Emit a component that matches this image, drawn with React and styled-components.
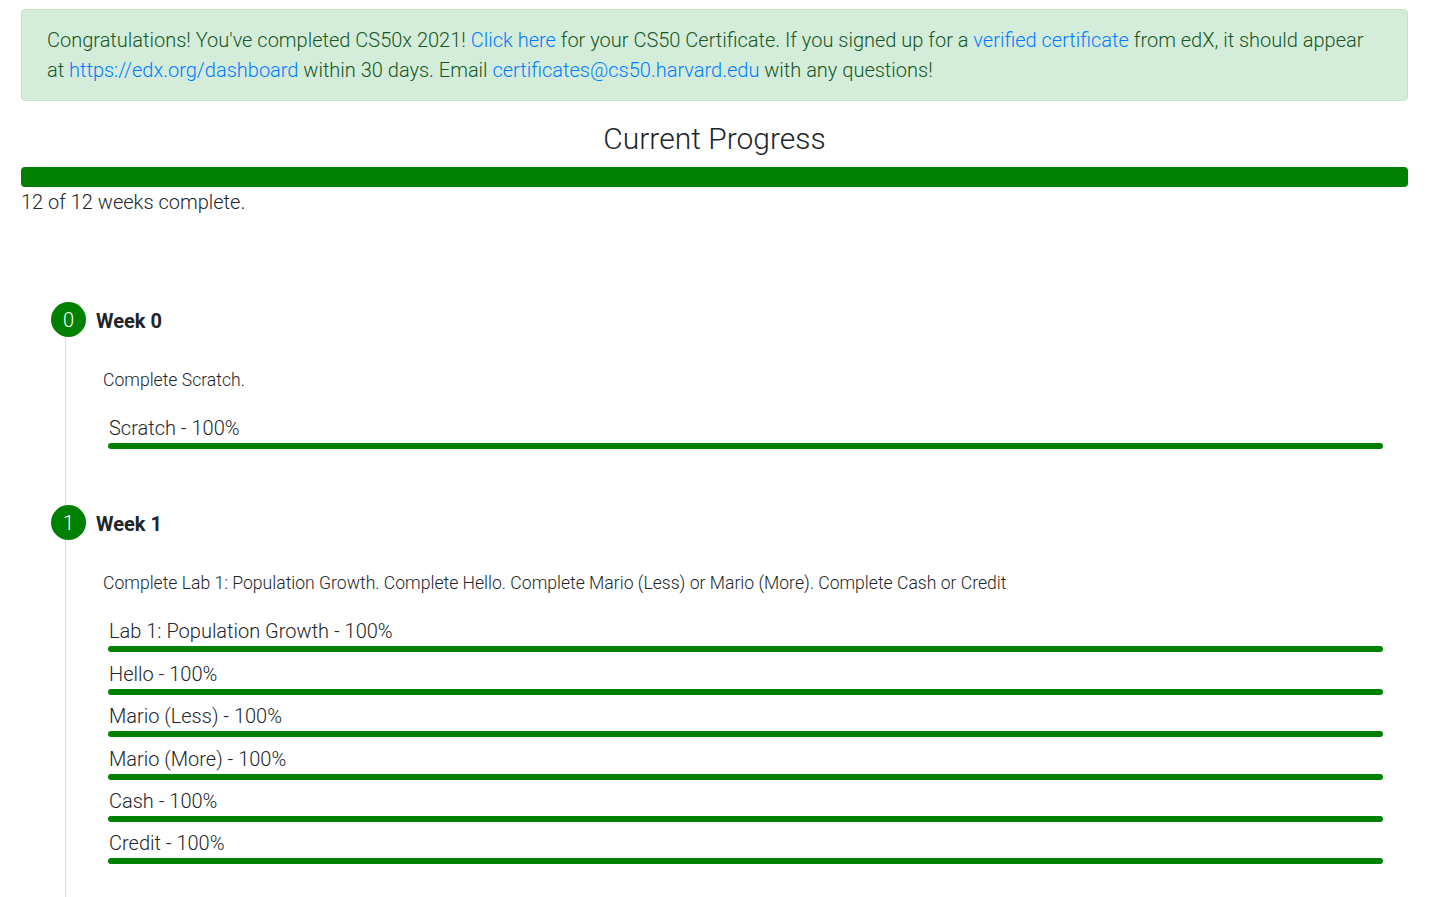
import React from 'react';
import styled, { createGlobalStyle } from 'styled-components';

const GlobalStyle = createGlobalStyle`
  html, body { margin: 0; padding: 0; background: #fff; }
  body {
    font-family: Roboto, "Liberation Sans", sans-serif;
    font-weight: 300;
    font-size: 20px;
    color: #212529;
  }
`;

const Page = styled.div`
  padding: 9px 35px 0 21px;
`;

const Alert = styled.div`
  background: #d4edda;
  border: 1px solid #c3e6cb;
  border-radius: 4px;
  color: #155724;
  padding: 15px 25px;
  line-height: 30px;
`;

const A = styled.a`
  color: #007bff;
  text-decoration: none;
`;

const Heading = styled.h2`
  margin: 20px 0 10px;
  text-align: center;
  font-weight: 300;
  font-size: 30px;
  line-height: 36px;
`;

const Progress = styled.div`
  height: 20px;
  border-radius: 4px;
  background: #e9ecef;
  overflow: hidden;
`;

const Fill = styled.div`
  height: 100%;
  background: #008000;
`;

const Summary = styled.div`
  line-height: 30px;
`;

const Timeline = styled.div`
  margin-top: 85px;
`;

const WeekHeader = styled.div`
  display: flex;
  align-items: center;
  gap: 10px;
  margin-left: 30px;
`;

const Circle = styled.div`
  width: 35px;
  height: 35px;
  border-radius: 50%;
  background: #008000;
  color: #fff;
  display: flex;
  align-items: center;
  justify-content: center;
  font-size: 20px;
  font-weight: 300;
`;

const WeekTitle = styled.div`
  font-weight: 700;
  font-size: 20px;
  line-height: 24px;
  padding-top: 3px;
`;

const WeekBody = styled.div`
  margin-left: 44px;
  border-left: 1px solid #dddddd;
  padding: 30px 25px 50px 37px;
`;

const Desc = styled.div`
  font-size: 17.6px;
  font-weight: 300;
  line-height: 26px;
  margin-bottom: 20px;
`;

const Items = styled.div`
  margin-left: 5px;
`;

const ItemLabel = styled.div`
  line-height: 30px;
  padding-left: 1px;
`;

const ItemBar = styled.div`
  height: 6px;
  border-radius: 3px;
  background: #e9ecef;
  margin-bottom: 6.4px;
  overflow: hidden;
`;

const weeks = [
  {
    n: 0,
    desc: 'Complete Scratch.',
    items: [['Scratch', 100]],
  },
  {
    n: 1,
    desc: 'Complete Lab 1: Population Growth. Complete Hello. Complete Mario (Less) or Mario (More). Complete Cash or Credit',
    items: [
      ['Lab 1: Population Growth', 100],
      ['Hello', 100],
      ['Mario (Less)', 100],
      ['Mario (More)', 100],
      ['Cash', 100],
      ['Credit', 100],
    ],
  },
];

const Week = ({ week }) => (
  <div>
    <WeekHeader>
      <Circle>{week.n}</Circle>
      <WeekTitle>Week {week.n}</WeekTitle>
    </WeekHeader>
    <WeekBody>
      <Desc>{week.desc}</Desc>
      <Items>
        {week.items.map(([name, pct]) => (
          <div key={name}>
            <ItemLabel>{name} - {pct}%</ItemLabel>
            <ItemBar>
              <Fill style={{ width: `${pct}%` }} />
            </ItemBar>
          </div>
        ))}
      </Items>
    </WeekBody>
  </div>
);

export default function App() {
  return (
    <>
      <GlobalStyle />
      <Page>
        <Alert>
          Congratulations! You've completed CS50x 2021! <A href="#">Click here</A> for your CS50 Certificate. If you signed up for a <A href="#">verified certificate</A> from edX, it should appear at <A href="#">https://edx.org/dashboard</A> within 30 days. Email <A href="#">certificates@cs50.harvard.edu</A> with any questions!
        </Alert>
        <Heading>Current Progress</Heading>
        <Progress>
          <Fill style={{ width: '100%' }} />
        </Progress>
        <Summary>12 of 12 weeks complete.</Summary>
        <Timeline>
          {weeks.map((w) => (
            <Week key={w.n} week={w} />
          ))}
        </Timeline>
      </Page>
    </>
  );
}
